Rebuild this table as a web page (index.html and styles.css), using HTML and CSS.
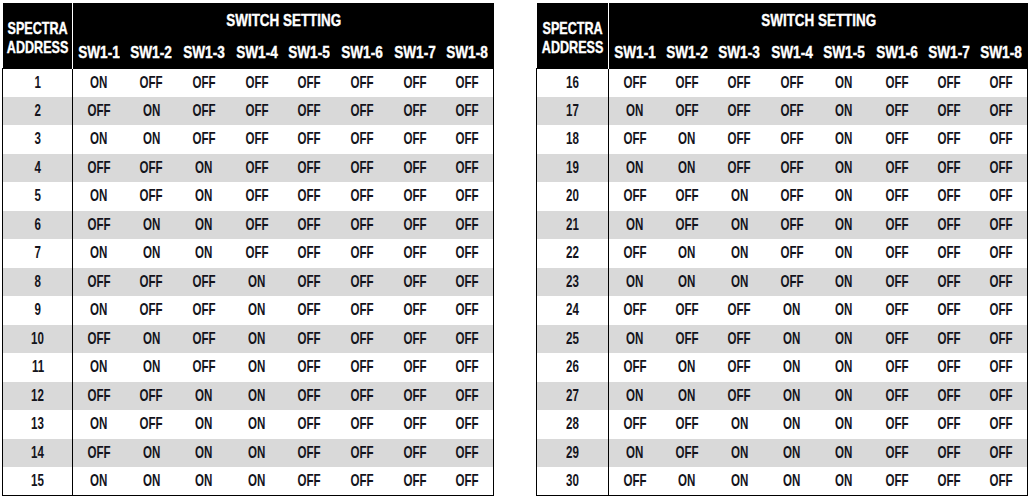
FILE: index.html
```html
<!DOCTYPE html>
<html>
<head>
<meta charset="utf-8">
<link rel="stylesheet" href="styles.css">
</head>
<body>
<div class="page">
<table class="sw sw-left">
<colgroup><col class="addr-col"><col><col><col><col><col><col><col><col></colgroup>
<thead>
<tr class="h1"><th rowspan="2" class="addr-h"><span class="c">SPECTRA<br>ADDRESS</span></th><th colspan="8" class="title"><span class="c">SWITCH SETTING</span></th></tr>
<tr class="h2"><th><span class="c">SW1-1</span></th><th><span class="c">SW1-2</span></th><th><span class="c">SW1-3</span></th><th><span class="c">SW1-4</span></th><th><span class="c">SW1-5</span></th><th><span class="c">SW1-6</span></th><th><span class="c">SW1-7</span></th><th><span class="c">SW1-8</span></th></tr>
</thead>
<tbody>
<tr><td class="a"><span class="c">1</span></td><td><span class="c">ON</span></td><td><span class="c">OFF</span></td><td><span class="c">OFF</span></td><td><span class="c">OFF</span></td><td><span class="c">OFF</span></td><td><span class="c">OFF</span></td><td><span class="c">OFF</span></td><td><span class="c">OFF</span></td></tr>
<tr><td class="a"><span class="c">2</span></td><td><span class="c">OFF</span></td><td><span class="c">ON</span></td><td><span class="c">OFF</span></td><td><span class="c">OFF</span></td><td><span class="c">OFF</span></td><td><span class="c">OFF</span></td><td><span class="c">OFF</span></td><td><span class="c">OFF</span></td></tr>
<tr><td class="a"><span class="c">3</span></td><td><span class="c">ON</span></td><td><span class="c">ON</span></td><td><span class="c">OFF</span></td><td><span class="c">OFF</span></td><td><span class="c">OFF</span></td><td><span class="c">OFF</span></td><td><span class="c">OFF</span></td><td><span class="c">OFF</span></td></tr>
<tr><td class="a"><span class="c">4</span></td><td><span class="c">OFF</span></td><td><span class="c">OFF</span></td><td><span class="c">ON</span></td><td><span class="c">OFF</span></td><td><span class="c">OFF</span></td><td><span class="c">OFF</span></td><td><span class="c">OFF</span></td><td><span class="c">OFF</span></td></tr>
<tr><td class="a"><span class="c">5</span></td><td><span class="c">ON</span></td><td><span class="c">OFF</span></td><td><span class="c">ON</span></td><td><span class="c">OFF</span></td><td><span class="c">OFF</span></td><td><span class="c">OFF</span></td><td><span class="c">OFF</span></td><td><span class="c">OFF</span></td></tr>
<tr><td class="a"><span class="c">6</span></td><td><span class="c">OFF</span></td><td><span class="c">ON</span></td><td><span class="c">ON</span></td><td><span class="c">OFF</span></td><td><span class="c">OFF</span></td><td><span class="c">OFF</span></td><td><span class="c">OFF</span></td><td><span class="c">OFF</span></td></tr>
<tr><td class="a"><span class="c">7</span></td><td><span class="c">ON</span></td><td><span class="c">ON</span></td><td><span class="c">ON</span></td><td><span class="c">OFF</span></td><td><span class="c">OFF</span></td><td><span class="c">OFF</span></td><td><span class="c">OFF</span></td><td><span class="c">OFF</span></td></tr>
<tr><td class="a"><span class="c">8</span></td><td><span class="c">OFF</span></td><td><span class="c">OFF</span></td><td><span class="c">OFF</span></td><td><span class="c">ON</span></td><td><span class="c">OFF</span></td><td><span class="c">OFF</span></td><td><span class="c">OFF</span></td><td><span class="c">OFF</span></td></tr>
<tr><td class="a"><span class="c">9</span></td><td><span class="c">ON</span></td><td><span class="c">OFF</span></td><td><span class="c">OFF</span></td><td><span class="c">ON</span></td><td><span class="c">OFF</span></td><td><span class="c">OFF</span></td><td><span class="c">OFF</span></td><td><span class="c">OFF</span></td></tr>
<tr><td class="a"><span class="c">10</span></td><td><span class="c">OFF</span></td><td><span class="c">ON</span></td><td><span class="c">OFF</span></td><td><span class="c">ON</span></td><td><span class="c">OFF</span></td><td><span class="c">OFF</span></td><td><span class="c">OFF</span></td><td><span class="c">OFF</span></td></tr>
<tr><td class="a"><span class="c">11</span></td><td><span class="c">ON</span></td><td><span class="c">ON</span></td><td><span class="c">OFF</span></td><td><span class="c">ON</span></td><td><span class="c">OFF</span></td><td><span class="c">OFF</span></td><td><span class="c">OFF</span></td><td><span class="c">OFF</span></td></tr>
<tr><td class="a"><span class="c">12</span></td><td><span class="c">OFF</span></td><td><span class="c">OFF</span></td><td><span class="c">ON</span></td><td><span class="c">ON</span></td><td><span class="c">OFF</span></td><td><span class="c">OFF</span></td><td><span class="c">OFF</span></td><td><span class="c">OFF</span></td></tr>
<tr><td class="a"><span class="c">13</span></td><td><span class="c">ON</span></td><td><span class="c">OFF</span></td><td><span class="c">ON</span></td><td><span class="c">ON</span></td><td><span class="c">OFF</span></td><td><span class="c">OFF</span></td><td><span class="c">OFF</span></td><td><span class="c">OFF</span></td></tr>
<tr><td class="a"><span class="c">14</span></td><td><span class="c">OFF</span></td><td><span class="c">ON</span></td><td><span class="c">ON</span></td><td><span class="c">ON</span></td><td><span class="c">OFF</span></td><td><span class="c">OFF</span></td><td><span class="c">OFF</span></td><td><span class="c">OFF</span></td></tr>
<tr><td class="a"><span class="c">15</span></td><td><span class="c">ON</span></td><td><span class="c">ON</span></td><td><span class="c">ON</span></td><td><span class="c">ON</span></td><td><span class="c">OFF</span></td><td><span class="c">OFF</span></td><td><span class="c">OFF</span></td><td><span class="c">OFF</span></td></tr>
</tbody>
</table>
<table class="sw sw-right">
<colgroup><col class="addr-col"><col><col><col><col><col><col><col><col></colgroup>
<thead>
<tr class="h1"><th rowspan="2" class="addr-h"><span class="c">SPECTRA<br>ADDRESS</span></th><th colspan="8" class="title"><span class="c">SWITCH SETTING</span></th></tr>
<tr class="h2"><th><span class="c">SW1-1</span></th><th><span class="c">SW1-2</span></th><th><span class="c">SW1-3</span></th><th><span class="c">SW1-4</span></th><th><span class="c">SW1-5</span></th><th><span class="c">SW1-6</span></th><th><span class="c">SW1-7</span></th><th><span class="c">SW1-8</span></th></tr>
</thead>
<tbody>
<tr><td class="a"><span class="c">16</span></td><td><span class="c">OFF</span></td><td><span class="c">OFF</span></td><td><span class="c">OFF</span></td><td><span class="c">OFF</span></td><td><span class="c">ON</span></td><td><span class="c">OFF</span></td><td><span class="c">OFF</span></td><td><span class="c">OFF</span></td></tr>
<tr><td class="a"><span class="c">17</span></td><td><span class="c">ON</span></td><td><span class="c">OFF</span></td><td><span class="c">OFF</span></td><td><span class="c">OFF</span></td><td><span class="c">ON</span></td><td><span class="c">OFF</span></td><td><span class="c">OFF</span></td><td><span class="c">OFF</span></td></tr>
<tr><td class="a"><span class="c">18</span></td><td><span class="c">OFF</span></td><td><span class="c">ON</span></td><td><span class="c">OFF</span></td><td><span class="c">OFF</span></td><td><span class="c">ON</span></td><td><span class="c">OFF</span></td><td><span class="c">OFF</span></td><td><span class="c">OFF</span></td></tr>
<tr><td class="a"><span class="c">19</span></td><td><span class="c">ON</span></td><td><span class="c">ON</span></td><td><span class="c">OFF</span></td><td><span class="c">OFF</span></td><td><span class="c">ON</span></td><td><span class="c">OFF</span></td><td><span class="c">OFF</span></td><td><span class="c">OFF</span></td></tr>
<tr><td class="a"><span class="c">20</span></td><td><span class="c">OFF</span></td><td><span class="c">OFF</span></td><td><span class="c">ON</span></td><td><span class="c">OFF</span></td><td><span class="c">ON</span></td><td><span class="c">OFF</span></td><td><span class="c">OFF</span></td><td><span class="c">OFF</span></td></tr>
<tr><td class="a"><span class="c">21</span></td><td><span class="c">ON</span></td><td><span class="c">OFF</span></td><td><span class="c">ON</span></td><td><span class="c">OFF</span></td><td><span class="c">ON</span></td><td><span class="c">OFF</span></td><td><span class="c">OFF</span></td><td><span class="c">OFF</span></td></tr>
<tr><td class="a"><span class="c">22</span></td><td><span class="c">OFF</span></td><td><span class="c">ON</span></td><td><span class="c">ON</span></td><td><span class="c">OFF</span></td><td><span class="c">ON</span></td><td><span class="c">OFF</span></td><td><span class="c">OFF</span></td><td><span class="c">OFF</span></td></tr>
<tr><td class="a"><span class="c">23</span></td><td><span class="c">ON</span></td><td><span class="c">ON</span></td><td><span class="c">ON</span></td><td><span class="c">OFF</span></td><td><span class="c">ON</span></td><td><span class="c">OFF</span></td><td><span class="c">OFF</span></td><td><span class="c">OFF</span></td></tr>
<tr><td class="a"><span class="c">24</span></td><td><span class="c">OFF</span></td><td><span class="c">OFF</span></td><td><span class="c">OFF</span></td><td><span class="c">ON</span></td><td><span class="c">ON</span></td><td><span class="c">OFF</span></td><td><span class="c">OFF</span></td><td><span class="c">OFF</span></td></tr>
<tr><td class="a"><span class="c">25</span></td><td><span class="c">ON</span></td><td><span class="c">OFF</span></td><td><span class="c">OFF</span></td><td><span class="c">ON</span></td><td><span class="c">ON</span></td><td><span class="c">OFF</span></td><td><span class="c">OFF</span></td><td><span class="c">OFF</span></td></tr>
<tr><td class="a"><span class="c">26</span></td><td><span class="c">OFF</span></td><td><span class="c">ON</span></td><td><span class="c">OFF</span></td><td><span class="c">ON</span></td><td><span class="c">ON</span></td><td><span class="c">OFF</span></td><td><span class="c">OFF</span></td><td><span class="c">OFF</span></td></tr>
<tr><td class="a"><span class="c">27</span></td><td><span class="c">ON</span></td><td><span class="c">ON</span></td><td><span class="c">OFF</span></td><td><span class="c">ON</span></td><td><span class="c">ON</span></td><td><span class="c">OFF</span></td><td><span class="c">OFF</span></td><td><span class="c">OFF</span></td></tr>
<tr><td class="a"><span class="c">28</span></td><td><span class="c">OFF</span></td><td><span class="c">OFF</span></td><td><span class="c">ON</span></td><td><span class="c">ON</span></td><td><span class="c">ON</span></td><td><span class="c">OFF</span></td><td><span class="c">OFF</span></td><td><span class="c">OFF</span></td></tr>
<tr><td class="a"><span class="c">29</span></td><td><span class="c">ON</span></td><td><span class="c">OFF</span></td><td><span class="c">ON</span></td><td><span class="c">ON</span></td><td><span class="c">ON</span></td><td><span class="c">OFF</span></td><td><span class="c">OFF</span></td><td><span class="c">OFF</span></td></tr>
<tr><td class="a"><span class="c">30</span></td><td><span class="c">OFF</span></td><td><span class="c">ON</span></td><td><span class="c">ON</span></td><td><span class="c">ON</span></td><td><span class="c">ON</span></td><td><span class="c">OFF</span></td><td><span class="c">OFF</span></td><td><span class="c">OFF</span></td></tr>
</tbody>
</table>
</div>
</body>
</html>
```
FILE: styles.css
```css
html, body {
  margin: 0;
  padding: 0;
  background: #ffffff;
}
.page {
  display: flex;
  gap: 42px;
  padding: 3px 0 0 2px;
}
.sw {
  border-collapse: collapse;
  table-layout: fixed;
  width: 492px;
  font-family: "Liberation Sans", Arial, sans-serif;
  color: #14141c;
}
.sw-left .addr-col { width: 70px; }
.sw-right .addr-col { width: 72px; }
.sw th {
  background: #000;
  color: #fff;
  font-weight: bold;
  font-size: 17px;
  line-height: 19px;
  padding: 0;
  text-align: center;
  vertical-align: top;
  white-space: nowrap;
}
.c {
  display: inline-block;
  transform-origin: center;
}
.sw th .c {
  transform: scaleX(0.8);
  -webkit-text-stroke: 0.4px #fff;
}
.sw th.title .c {
  transform: scaleX(0.79);
}
.sw th.addr-h .c {
  transform: scaleX(0.74);
  margin: 0 -12px;
}
.h1 { height: 31px; }
.h2 { height: 34px; }
.h1 th.title { padding-top: 8px; }
.h2 th { padding-top: 9px; }
.sw th.addr-h {
  border-right: 1px solid #fff;
  padding-top: 16px;
}
.sw tbody {
  border: 1.5px solid #000;
}
.sw tbody tr { height: 28.5px; }
.sw tbody tr:nth-child(even) { background: #d9d9d9; }
.sw td {
  padding: 0;
  text-align: center;
  vertical-align: middle;
  font-size: 17px;
  font-weight: bold;
  white-space: nowrap;
}
.sw td .c {
  transform: scaleX(0.68);
}
.sw td.a {
  border-right: 1px solid #000;
}
```
